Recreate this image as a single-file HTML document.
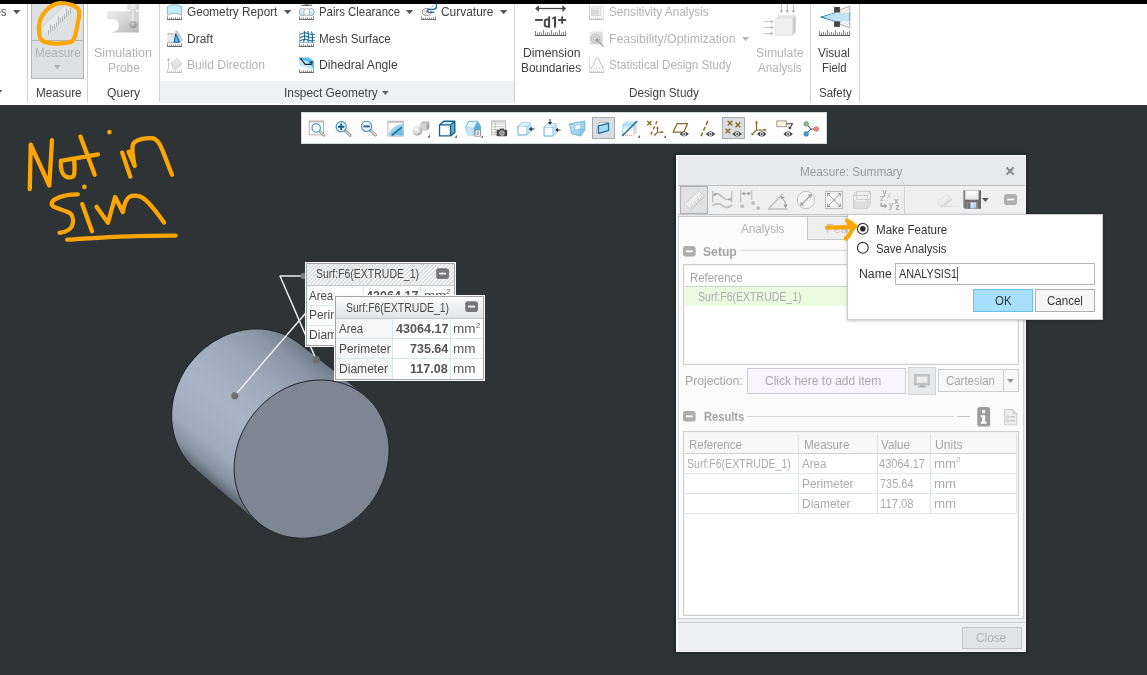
<!DOCTYPE html>
<html><head><meta charset="utf-8"><title>Measure</title>
<style>
html,body{margin:0;padding:0;}
body{width:1147px;height:675px;overflow:hidden;position:relative;background:#2e3436;font-family:"Liberation Sans",sans-serif;}
.r{position:absolute;display:block;}
.t{position:absolute;white-space:pre;transform-origin:0 0;line-height:16px;height:16px;font-family:"Liberation Sans",sans-serif;}
sup{font-size:62%;line-height:0;vertical-align:baseline;position:relative;top:-0.5em;letter-spacing:0}
</style></head><body>
<div style="position:absolute;left:0;top:0;width:1147px;height:675px;overflow:hidden;will-change:transform">
<div class="r" style="left:0.0px;top:0.0px;width:1147.0px;height:104.5px;background:#ffffff;"></div>
<div class="r" style="left:160.3px;top:81.0px;width:353.7px;height:22.0px;background:#eef2f3;"></div>
<div class="r" style="left:26.9px;top:4.0px;width:1.0px;height:98.0px;background:#cfd1d3;"></div>
<div class="r" style="left:87.0px;top:4.0px;width:1.0px;height:98.0px;background:#cfd1d3;"></div>
<div class="r" style="left:159.1px;top:4.0px;width:1.0px;height:98.0px;background:#cfd1d3;"></div>
<div class="r" style="left:513.7px;top:4.0px;width:1.0px;height:98.0px;background:#cfd1d3;"></div>
<div class="r" style="left:810.0px;top:4.0px;width:1.0px;height:98.0px;background:#cfd1d3;"></div>
<div class="r" style="left:859.0px;top:4.0px;width:1.0px;height:98.0px;background:#cfd1d3;"></div>
<span class="t" style="left:-4.7px;top:4.3px;font-size:12px;color:#3f3f3f;font-weight:400;transform:scaleX(0.8828)">es</span>
<svg class="r" style="left:12.8px;top:9.9px;" width="8" height="5" viewBox="0 0 8 5"><path d="M0,0H7.4L3.7,4.2Z" fill="#555"/></svg>
<svg class="r" style="left:-4.6px;top:90.0px;" width="8" height="5" viewBox="0 0 8 5"><path d="M0,0H7.4L3.7,4.2Z" fill="#555"/></svg>
<div class="r" style="left:31.3px;top:0.0px;width:52.7px;height:78.6px;background:#dfe0e2;border:1px solid #b4b5b7;box-sizing:border-box;"></div>
<div class="r" style="left:31.3px;top:39.7px;width:52.7px;height:1.0px;background:#b4b5b7;"></div>
<svg class="r" style="left:30.0px;top:0.0px;" width="60" height="50" viewBox="0 0 60 50"><g transform="translate(-30,0)"><path d="M41,28.2L63,6.8L72.9,11L48.3,35Z" fill="#e9eaeb"/><path d="M41,28.2L63,6.8" stroke="#c9cacc" stroke-width="0.7" fill="none"/><path d="M48.3,35L72.9,11" stroke="#cfd0d2" stroke-width="0.6" fill="none"/><path d="M48.5,34.6v-4.8M50.5,32.7v-8.3M52.5,30.7v-4.8M54.5,28.8v-4.8M56.5,26.8v-4.8M58.5,24.8v-8.3M60.5,22.9v-4.8M62.5,20.9v-4.8M64.5,19.0v-4.8M66.5,17.0v-8.3M68.5,15.1v-4.8M70.5,13.1v-4.8" stroke="#b1b2b4" stroke-width="1" fill="none"/></g></svg>
<span class="t" style="left:34.8px;top:44.9px;font-size:12px;color:#b3b3b3;font-weight:400;transform:scaleX(0.9810)">Measure</span>
<svg class="r" style="left:54.0px;top:64.8px;" width="8" height="5" viewBox="0 0 8 5"><path d="M0,0H6.6L3.3,4Z" fill="#b0b0b0"/></svg>
<span class="t" style="left:35.9px;top:84.8px;font-size:12px;color:#3f3f3f;font-weight:400;transform:scaleX(0.9767)">Measure</span>
<div class="r" style="left:0.0px;top:0.0px;width:1147.0px;height:3.6px;background:#000000;"></div>
<svg class="r" style="left:30.0px;top:0.0px;" width="60" height="50" viewBox="0 0 60 50"><path d="M30.3,3.1 C26,3.6 22.5,5 20,7 C16,10.5 13,14 11.5,17 C9.8,20.5 9,24 8.9,27 C8.8,31 9,34 9.8,36.5 C10.8,39.5 12.5,41.2 15,42 C19,43.6 23,43.7 27,43.6 C32,43.5 37,43 41,42 C43.5,41 44.5,38 45.3,35 C46.5,30.5 47.5,25 48.5,19 C49.2,15.5 49.6,13 49,10.8 C48,8 46,6.6 43.5,5.5 C40,4 35,3 30.5,3" fill="none" stroke="#fda503" stroke-width="4.2" stroke-linecap="round" stroke-linejoin="round"/></svg>
<svg class="r" style="left:105.0px;top:3.0px;" width="38" height="32" viewBox="0 0 38 32"><defs><linearGradient id="pg" x1="0" y1="0" x2="1" y2="1"><stop offset="0" stop-color="#ececec"/><stop offset="0.55" stop-color="#d2d2d2"/><stop offset="1" stop-color="#b4b4b4"/></linearGradient>
<linearGradient id="pg2" x1="0" y1="0" x2="1" y2="0"><stop offset="0" stop-color="#d9d9d9"/><stop offset="0.5" stop-color="#f0f0f0"/><stop offset="1" stop-color="#c4c4c4"/></linearGradient>
<radialGradient id="pg3" cx=".4" cy=".35" r=".7"><stop offset="0" stop-color="#cfcfcf"/><stop offset="1" stop-color="#8c8c8c"/></radialGradient></defs>
<path d="M2.2,8.3H33.8V29.6H6.1 C10,29.2 13.8,27 13.9,22.8 C13.9,18.8 11,16.2 7.5,16.1 H2.2Z" fill="url(#pg)"/>
<rect x="24.3" y="8.3" width="7.4" height="11.5" fill="#e4e4e4" opacity=".8"/>
<rect x="22.3" y="1.2" width="11.5" height="5.8" fill="url(#pg2)"/>
<rect x="26" y="6.9" width="4.1" height="12.6" fill="url(#pg2)" stroke="#bdbdbd" stroke-width="0.5"/>
<circle cx="28.1" cy="21.6" r="3.7" fill="url(#pg3)"/></svg>
<span class="t" style="left:94.2px;top:45.0px;font-size:12px;color:#b3b3b3;font-weight:400;transform:scaleX(1.0334)">Simulation</span>
<span class="t" style="left:107.7px;top:59.6px;font-size:12px;color:#b3b3b3;font-weight:400;transform:scaleX(0.9928)">Probe</span>
<span class="t" style="left:107.3px;top:84.9px;font-size:12px;color:#3f3f3f;font-weight:400;transform:scaleX(1.0126)">Query</span>
<svg class="r" style="left:166.0px;top:3.0px;" width="18" height="18" viewBox="0 0 18 18"><path d="M1.3,12.2V3.8Q8.5,-0.6 15.7,3.8V12.2Q8.5,8.4 1.3,12.2Z" fill="#c3ecfb" stroke="#9a9da0" stroke-width="0.8"/></svg>
<svg class="r" style="left:167.0px;top:14.0px;" width="16" height="6" viewBox="0 0 16 6"><path d="M0,5.5H15" stroke="#6d6d6d" stroke-width="1" fill="none"/><path d="M0.5,5v-2.6M2.5,5v-1.2M4.5,5v-1.7M6.5,5v-1.2M8.5,5v-1.7M10.5,5v-1.2M12.5,5v-1.7M14.5,5v-2.6" stroke="#6d6d6d" stroke-width="1" fill="none" opacity="0.8"/></svg>
<span class="t" style="left:186.9px;top:3.9px;font-size:12px;color:#3f3f3f;font-weight:400;transform:scaleX(0.9821)">Geometry Report</span>
<svg class="r" style="left:283.5px;top:9.6px;" width="8" height="5" viewBox="0 0 8 5"><path d="M0,0H7.2L3.6,4.2Z" fill="#555"/></svg>
<svg class="r" style="left:166.0px;top:30.0px;" width="18" height="18" viewBox="0 0 18 18"><rect x="1.3" y="3.8" width="7" height="8.5" fill="#e9e9e9"/><path d="M1.3,3.8H8.3M1.3,12.4H8.3" stroke="#9a9a9a" stroke-width="0.8"/><path d="M9.5,1.6L11.5,1.2L16.3,10.2L14.5,12Z" fill="#c9d6df" stroke="#9aa7b0" stroke-width="0.6"/><path d="M8.2,12.3L9.6,3.8L13.5,12.3Z" fill="#5bc0ee" stroke="#1b5f8c" stroke-width="1.1" stroke-linejoin="round"/></svg>
<svg class="r" style="left:167.0px;top:41.0px;" width="16" height="6" viewBox="0 0 16 6"><path d="M0,5.5H15" stroke="#6d6d6d" stroke-width="1" fill="none"/><path d="M0.5,5v-2.6M2.5,5v-1.2M4.5,5v-1.7M6.5,5v-1.2M8.5,5v-1.7M10.5,5v-1.2M12.5,5v-1.7M14.5,5v-2.6" stroke="#6d6d6d" stroke-width="1" fill="none" opacity="0.8"/></svg>
<span class="t" style="left:186.9px;top:30.6px;font-size:12px;color:#3f3f3f;font-weight:400;transform:scaleX(0.9994)">Draft</span>
<svg class="r" style="left:166.0px;top:56.0px;" width="18" height="18" viewBox="0 0 18 18"><path d="M2.5,2.6V13.5M1.1,4.6L2.5,2.2L3.9,4.6" fill="none" stroke="#b9b9b9" stroke-width="0.8"/><path d="M4.8,7.2L11.2,2L16,7.6L14.6,10.6L8,14Z" fill="#e6e6e6" stroke="#cfcfcf" stroke-width="0.7"/><path d="M4.8,7.2L9,11L8,14M9,11L16,7.6" fill="none" stroke="#cfcfcf" stroke-width="0.7"/></svg>
<svg class="r" style="left:167.0px;top:67.0px;" width="16" height="6" viewBox="0 0 16 6"><path d="M0,5.5H15" stroke="#bdbdbd" stroke-width="1" fill="none"/><path d="M0.5,5v-2.6M2.5,5v-1.2M4.5,5v-1.7M6.5,5v-1.2M8.5,5v-1.7M10.5,5v-1.2M12.5,5v-1.7M14.5,5v-2.6" stroke="#bdbdbd" stroke-width="1" fill="none" opacity="0.8"/></svg>
<span class="t" style="left:186.9px;top:56.7px;font-size:12px;color:#b3b3b3;font-weight:400;transform:scaleX(1.0094)">Build Direction</span>
<svg class="r" style="left:298.0px;top:0.0px;" width="18" height="18" viewBox="0 0 18 18"><defs><linearGradient id="pc" x1="0" y1="0" x2="0" y2="1"><stop offset="0" stop-color="#e6f6fc"/><stop offset="1" stop-color="#b5e2f5"/></linearGradient></defs><ellipse cx="4.4" cy="12.1" rx="3.2" ry="3.7" fill="url(#pc)" stroke="#9a9da0" stroke-width="0.8"/><ellipse cx="12.9" cy="12.1" rx="3.2" ry="3.7" fill="url(#pc)" stroke="#9a9da0" stroke-width="0.8"/><ellipse cx="8.65" cy="12.1" rx="2.9" ry="3.7" fill="#fff" stroke="#9a9da0" stroke-width="0.8"/><path d="M3,5.3H14.2" stroke="#333" stroke-width="0.8"/><path d="M7.2,4.3L8.2,5.8L8.7,4.6L9.2,5.8L10.2,4.3" fill="none" stroke="#333" stroke-width="0.7"/></svg>
<svg class="r" style="left:299.0px;top:14.0px;" width="16" height="6" viewBox="0 0 16 6"><path d="M0,5.5H15" stroke="#6d6d6d" stroke-width="1" fill="none"/><path d="M0.5,5v-2.6M2.5,5v-1.2M4.5,5v-1.7M6.5,5v-1.2M8.5,5v-1.7M10.5,5v-1.2M12.5,5v-1.7M14.5,5v-2.6" stroke="#6d6d6d" stroke-width="1" fill="none" opacity="0.8"/></svg>
<span class="t" style="left:318.7px;top:3.9px;font-size:12px;color:#3f3f3f;font-weight:400;transform:scaleX(0.9488)">Pairs Clearance</span>
<svg class="r" style="left:405.9px;top:9.6px;" width="8" height="5" viewBox="0 0 8 5"><path d="M0,0H7.2L3.6,4.2Z" fill="#555"/></svg>
<svg class="r" style="left:298.0px;top:30.0px;" width="18" height="18" viewBox="0 0 18 18"><path d="M1.7,1.6V12.7H16.9" fill="none" stroke="#9a9a9a" stroke-width="0.8"/><path d="M1.7,4.6Q6,1.6 10,3.4T16.8,4M1.7,8Q6,5 10,6.8T16.8,7.2M1.7,11Q6,8.4 10,10T16.8,10.2" fill="none" stroke="#2a7fb0" stroke-width="1.1"/><path d="M6.2,1Q7.6,6 5.6,12.4M10,1Q10.8,6.5 10,12.4M13.6,1.4Q15.2,7 14.2,12.4" fill="none" stroke="#1d5f88" stroke-width="1.1"/></svg>
<svg class="r" style="left:299.0px;top:41.0px;" width="16" height="6" viewBox="0 0 16 6"><path d="M0,5.5H15" stroke="#6d6d6d" stroke-width="1" fill="none"/><path d="M0.5,5v-2.6M2.5,5v-1.2M4.5,5v-1.7M6.5,5v-1.2M8.5,5v-1.7M10.5,5v-1.2M12.5,5v-1.7M14.5,5v-2.6" stroke="#6d6d6d" stroke-width="1" fill="none" opacity="0.8"/></svg>
<span class="t" style="left:318.7px;top:30.6px;font-size:12px;color:#3f3f3f;font-weight:400;transform:scaleX(0.9697)">Mesh Surface</span>
<svg class="r" style="left:298.0px;top:56.0px;" width="18" height="18" viewBox="0 0 18 18"><path d="M1.1,1.5H10.7L16.1,5.5V13.4L1.1,9.4Z" fill="#bfe8f8"/><path d="M1.1,1.5H10.7L16.1,5.5V13.4L10,5.4L1.1,3.4Z" fill="#5abfee"/><path d="M3,3L7.2,8.4H13" fill="none" stroke="#1a1a1a" stroke-width="1.1"/><path d="M11.5,6.9L14.2,5.6L13.6,8.6" fill="none" stroke="#1a1a1a" stroke-width="1"/><path d="M2.2,2.2L3.8,3.8M3.8,2.2L2.2,3.8" stroke="#1a1a1a" stroke-width="0.7"/></svg>
<svg class="r" style="left:299.0px;top:67.0px;" width="16" height="6" viewBox="0 0 16 6"><path d="M0,5.5H15" stroke="#6d6d6d" stroke-width="1" fill="none"/><path d="M0.5,5v-2.6M2.5,5v-1.2M4.5,5v-1.7M6.5,5v-1.2M8.5,5v-1.7M10.5,5v-1.2M12.5,5v-1.7M14.5,5v-2.6" stroke="#6d6d6d" stroke-width="1" fill="none" opacity="0.8"/></svg>
<span class="t" style="left:318.7px;top:56.7px;font-size:12px;color:#3f3f3f;font-weight:400;transform:scaleX(1.0094)">Dihedral Angle</span>
<svg class="r" style="left:420.0px;top:0.0px;" width="18" height="18" viewBox="0 0 18 18"><ellipse cx="6.7" cy="12" rx="4.4" ry="3.4" fill="none" stroke="#7d7d7d" stroke-width="0.9"/><path d="M6.7,12L3,10.6M6.7,12L4.4,14.2M6.7,12L9,9" stroke="#9a9a9a" stroke-width="0.6"/><path d="M16.4,3.6V6.6Q16.2,9.2 13.4,9.3H9.2Q6.8,9.6 7.2,11.2Q7.8,12.5 10,12.4H13.8" fill="none" stroke="#1f6a8e" stroke-width="1.3" stroke-linecap="round"/><path d="M11.5,7.4L13.2,5.9" stroke="#8a8a8a" stroke-width="0.8"/></svg>
<svg class="r" style="left:421.0px;top:14.0px;" width="16" height="6" viewBox="0 0 16 6"><path d="M0,5.5H15" stroke="#6d6d6d" stroke-width="1" fill="none"/><path d="M0.5,5v-2.6M2.5,5v-1.2M4.5,5v-1.7M6.5,5v-1.2M8.5,5v-1.7M10.5,5v-1.2M12.5,5v-1.7M14.5,5v-2.6" stroke="#6d6d6d" stroke-width="1" fill="none" opacity="0.8"/></svg>
<span class="t" style="left:440.8px;top:3.9px;font-size:12px;color:#3f3f3f;font-weight:400;transform:scaleX(0.9945)">Curvature</span>
<svg class="r" style="left:500.1px;top:9.6px;" width="8" height="5" viewBox="0 0 8 5"><path d="M0,0H7.2L3.6,4.2Z" fill="#555"/></svg>
<span class="t" style="left:284.2px;top:84.6px;font-size:12px;color:#3f3f3f;font-weight:400;transform:scaleX(0.9903)">Inspect Geometry</span>
<svg class="r" style="left:382.0px;top:90.6px;" width="8" height="5" viewBox="0 0 8 5"><path d="M0,0H6.8L3.4,4Z" fill="#666"/></svg>
<svg class="r" style="left:533.0px;top:3.0px;" width="36" height="28" viewBox="0 0 36 28"><g transform="translate(-533,-3)" fill="#454545"><rect x="537" y="7.9" width="27.5" height="1.25"/><path d="M538.9,5.2L535.2,8.5L538.9,11.9ZM562.4,5.2L566.1,8.5L562.4,11.9Z"/>
<rect x="535.1" y="19" width="7.7" height="1.9"/><rect x="548.2" y="16.4" width="1.9" height="11.1"/><path d="M546.4,18.6H550V27.5H546.4Q543.8,27.3 543.8,25V21.1Q543.8,18.8 546.4,18.6ZM546.8,20.4Q545.7,20.5 545.7,21.6V24.5Q545.7,25.6 546.8,25.7H548.3V20.4Z" fill-rule="evenodd"/>
<path d="M554,16.4H556V27.5H554ZM554,16.4L552.2,17.9V19.6L554,18.4Z"/><rect x="558.1" y="19.1" width="8" height="1.9"/><rect x="561.2" y="16.4" width="1.9" height="7.3"/></g></svg>
<svg class="r" style="left:535.0px;top:28.0px;" width="32" height="8" viewBox="0 0 32 8"><path d="M0,7.5H31" stroke="#5a5a5a" stroke-width="1" fill="none"/><path d="M0.5,7v-4.0M2.5,7v-2.4M4.5,7v-3.0M6.5,7v-2.4M8.5,7v-5.0M10.5,7v-2.4M12.5,7v-3.0M14.5,7v-2.4M16.5,7v-5.0M18.5,7v-2.4M20.5,7v-3.0M22.5,7v-2.4M24.5,7v-5.0M26.5,7v-2.4M28.5,7v-3.0M30.5,7v-4.0" stroke="#5a5a5a" stroke-width="1" fill="none" opacity="0.72"/></svg>
<span class="t" style="left:522.5px;top:45.0px;font-size:12px;color:#3f3f3f;font-weight:400;transform:scaleX(1.0141)">Dimension</span>
<span class="t" style="left:521.2px;top:59.9px;font-size:12px;color:#3f3f3f;font-weight:400;transform:scaleX(0.9898)">Boundaries</span>
<svg class="r" style="left:588.0px;top:3.0px;" width="18" height="17" viewBox="0 0 18 17"><g transform="translate(-588,-3)"><path d="M589.500,4.500V19" stroke="#c9c9c9" stroke-width="0.900"/><path d="M591.500,6.500H603.500V15.500" fill="none" stroke="#cfcfcf" stroke-width="0.900" stroke-dasharray="1.500 0.800"/><rect x="591.500" y="8" width="9.500" height="7.500" fill="#f1f1f1" stroke="#cdcdcd" stroke-width="0.800"/><rect x="592" y="9.500" width="7" height="6" fill="#dadada"/></g></svg>
<svg class="r" style="left:589.0px;top:14.0px;" width="16" height="6" viewBox="0 0 16 6"><path d="M0,5.5H15" stroke="#c2c2c2" stroke-width="1" fill="none"/><path d="M0.5,5v-2.6M2.5,5v-1.2M4.5,5v-1.7M6.5,5v-1.2M8.5,5v-1.7M10.5,5v-1.2M12.5,5v-1.7M14.5,5v-2.6" stroke="#c2c2c2" stroke-width="1" fill="none" opacity="0.8"/></svg>
<span class="t" style="left:608.6px;top:4.3px;font-size:12px;color:#b3b3b3;font-weight:400;transform:scaleX(0.9835)">Sensitivity Analysis</span>
<svg class="r" style="left:588.0px;top:30.0px;" width="18" height="18" viewBox="0 0 18 18"><g transform="translate(-588,-30)"><defs><linearGradient id="fz" x1="0" y1="0" x2="1" y2="1"><stop offset="0" stop-color="#ededed"/><stop offset="1" stop-color="#cfcfcf"/></linearGradient></defs><rect x="589.400" y="31.600" width="13.200" height="12.900" rx="1.500" fill="url(#fz)"/><circle cx="595.300" cy="38.300" r="4.300" fill="none" stroke="#b3b3b3" stroke-width="0.900"/><circle cx="595.300" cy="38.300" r="2.200" fill="none" stroke="#b3b3b3" stroke-width="0.900"/><path d="M603.700,46.500L597,40" stroke="#9c9c9c" stroke-width="1.100"/><path d="M595.300,38.300L599.200,39.300L596.400,42.100Z" fill="#9c9c9c"/></g></svg>
<span class="t" style="left:608.6px;top:31.1px;font-size:12px;color:#b3b3b3;font-weight:400;transform:scaleX(1.0253)">Feasibility/Optimization</span>
<svg class="r" style="left:741.6px;top:37.0px;" width="8" height="5" viewBox="0 0 8 5"><path d="M0,0H7.2L3.6,4.2Z" fill="#b8b8b8"/></svg>
<svg class="r" style="left:588.0px;top:56.0px;" width="18" height="14" viewBox="0 0 18 14"><g transform="translate(-588,-56)"><path d="M589.500,57.500V68.200H604" fill="none" stroke="#c4c4c4" stroke-width="0.900" stroke-dasharray="2 0.800"/><path d="M590.800,67.600C594,67.200 595.200,57.600 597.300,57.600C599.400,57.600 600.600,67.200 603.800,67.600" fill="none" stroke="#bdbdbd" stroke-width="1"/></g></svg>
<svg class="r" style="left:589.0px;top:67.0px;" width="16" height="6" viewBox="0 0 16 6"><path d="M0,5.5H15" stroke="#c2c2c2" stroke-width="1" fill="none"/><path d="M0.5,5v-2.6M2.5,5v-1.2M4.5,5v-1.7M6.5,5v-1.2M8.5,5v-1.7M10.5,5v-1.2M12.5,5v-1.7M14.5,5v-2.6" stroke="#c2c2c2" stroke-width="1" fill="none" opacity="0.8"/></svg>
<span class="t" style="left:608.6px;top:56.6px;font-size:12px;color:#b3b3b3;font-weight:400;transform:scaleX(0.9694)">Statistical Design Study</span>
<svg class="r" style="left:760.0px;top:3.0px;" width="40" height="34" viewBox="0 0 40 34"><g transform="translate(-760,-3)"><g stroke="#b9b9b9" stroke-width="1" fill="#b2b2b2"><path d="M781.4,3.8V11M787.3,3.8V11M793.4,3.800V11" fill="none"/><path d="M779.6,10.2L781.4,13.200L783.2,10.200ZM785.500,10.200L787.300,13.200L789.100,10.200ZM791.600,10.200L793.400,13.200L795.200,10.200Z" stroke="none"/>
<path d="M764.1,21.600H771.500M764.100,27.600H771.500M764.100,33.600H771.500" fill="none" stroke="#c4c4c4"/><path d="M770.800,19.800L773.800,21.600L770.800,23.400ZM770.800,25.800L773.800,27.600L770.800,29.400ZM770.800,31.800L773.800,33.600L770.800,35.400Z" stroke="none" fill="#bcbcbc"/></g>
<path d="M775.300,18.200L778.500,15.200H795.800L792.400,18.200Z" fill="#e2e2e2"/><path d="M792.400,18.200L795.800,15.200V32.100L792.400,35.500Z" fill="#cbcbcb"/><rect x="775.300" y="18.200" width="17.100" height="17.300" fill="#efefef" stroke="#dedede" stroke-width="0.600"/></g></svg>
<span class="t" style="left:756.1px;top:45.0px;font-size:12px;color:#b3b3b3;font-weight:400;transform:scaleX(1.0195)">Simulate</span>
<span class="t" style="left:757.7px;top:59.9px;font-size:12px;color:#b3b3b3;font-weight:400;transform:scaleX(0.9779)">Analysis</span>
<span class="t" style="left:628.5px;top:84.8px;font-size:12px;color:#3f3f3f;font-weight:400;transform:scaleX(0.9779)">Design Study</span>
<svg class="r" style="left:819.0px;top:3.0px;" width="33" height="28" viewBox="0 0 33 28"><g transform="translate(-819,-3)"><path d="M839.900,9.600L849.800,6.300V27.600L839.900,24.300Z" fill="#fbfbfb" stroke="#9a9a9a" stroke-width="0.800"/><path d="M840.500,12L846,7.800M840.500,15.500L849.500,8.600M840.500,19L849.500,12.100M840.500,22.500L849.500,15.600M842,24.800L849.500,19.100M845.500,26L849.500,22.600" stroke="#b5b5b5" stroke-width="0.600"/>
<path d="M821.200,17.100L849.500,12.900V21.100Z" fill="#bde3f5"/><path d="M834.100,15.200L821.200,17.100L834.100,19" fill="none" stroke="#1f7fb5" stroke-width="1.100" stroke-linejoin="round"/><path d="M849.500,12.900V21.100" stroke="#1f7fb5" stroke-width="1.100"/><path d="M821.200,17.100L836,12.700M821.200,17.100L836,21.500" stroke="#1f7fb5" stroke-width="1" fill="none"/>
<path d="M822.500,17.100L836,13.100L849.500,12.900V21.100L836,21.100Z" fill="#bde3f5"/><rect x="834.100" y="6.900" width="5.800" height="5.600" fill="#444"/><rect x="834.100" y="21.300" width="5.800" height="5.600" fill="#444"/></g></svg>
<svg class="r" style="left:819.0px;top:28.0px;" width="32.5" height="8" viewBox="0 0 32.5 8"><path d="M0,7.5H31" stroke="#5a5a5a" stroke-width="1" fill="none"/><path d="M0.5,7v-4.0M2.5,7v-2.4M4.5,7v-3.0M6.5,7v-2.4M8.5,7v-5.0M10.5,7v-2.4M12.5,7v-3.0M14.5,7v-2.4M16.5,7v-5.0M18.5,7v-2.4M20.5,7v-3.0M22.5,7v-2.4M24.5,7v-5.0M26.5,7v-2.4M28.5,7v-3.0M30.5,7v-4.0" stroke="#5a5a5a" stroke-width="1" fill="none" opacity="0.72"/></svg>
<span class="t" style="left:818.3px;top:45.0px;font-size:12px;color:#3f3f3f;font-weight:400;transform:scaleX(0.9794)">Visual</span>
<span class="t" style="left:822.3px;top:59.9px;font-size:12px;color:#3f3f3f;font-weight:400;transform:scaleX(0.9417)">Field</span>
<span class="t" style="left:819.0px;top:84.8px;font-size:12px;color:#3f3f3f;font-weight:400;transform:scaleX(0.9609)">Safety</span>
<div class="r" style="left:300.9px;top:111.7px;width:526.4px;height:32.4px;background:#ffffff;border:1px solid #d3dadd;box-sizing:border-box;"></div>
<div class="r" style="left:591.9px;top:117.1px;width:22.8px;height:22.3px;background:#dcdddf;border:1px solid #a9aaac;box-sizing:border-box;"></div>
<div class="r" style="left:722.3px;top:117.1px;width:22.3px;height:22.3px;background:#dcdddf;border:1px solid #a9aaac;box-sizing:border-box;"></div>
<svg class="r" style="left:307.3px;top:117.5px;" width="20" height="20" viewBox="0 0 20 20"><rect x="2.2" y="3" width="14.3" height="13.9" fill="#fbfbfb" stroke="#ababab" stroke-width="0.9"/><rect x="2.2" y="3" width="14.3" height="1.4" fill="#b9b9b9"/><path d="M12.6,13.3L16.8,17.2" stroke="#8c8c8c" stroke-width="2.8" stroke-linecap="round"/><path d="M12.6,13.3L16.8,17.2" stroke="#dedede" stroke-width="1.3" stroke-linecap="round"/><circle cx="9.2" cy="9.9" r="4.2" fill="#f2f9fd" stroke="#3a8fc0" stroke-width="1.1"/></svg>
<svg class="r" style="left:332.7px;top:117.5px;" width="20" height="20" viewBox="0 0 20 20"><path d="M12.3,12.9L17.2,17.4" stroke="#8c8c8c" stroke-width="2.8" stroke-linecap="round"/><path d="M12.3,12.9L17.2,17.4" stroke="#dedede" stroke-width="1.3" stroke-linecap="round"/><circle cx="8.2" cy="8.7" r="5.1" fill="#f2f9fd" stroke="#3a8fc0" stroke-width="1.1"/><path d="M5,8.7H11.4M8.2,5.500V11.9" stroke="#1b5d8c" stroke-width="1.9"/></svg>
<svg class="r" style="left:358.2px;top:117.5px;" width="20" height="20" viewBox="0 0 20 20"><path d="M12.7,12.6L17.6,17.1" stroke="#8c8c8c" stroke-width="2.8" stroke-linecap="round"/><path d="M12.7,12.6L17.6,17.1" stroke="#dedede" stroke-width="1.3" stroke-linecap="round"/><circle cx="8.6" cy="8.4" r="5.1" fill="#f2f9fd" stroke="#3a8fc0" stroke-width="1.1"/><path d="M5.400,8.400H11.8" stroke="#1b5d8c" stroke-width="1.9"/></svg>
<svg class="r" style="left:384.5px;top:117.5px;" width="20" height="20" viewBox="0 0 20 20"><defs><linearGradient id="rp" x1="0" y1="0" x2="1" y2="1"><stop offset="0.2" stop-color="#c3e3f2"/><stop offset="1" stop-color="#58afd8"/></linearGradient></defs><rect x="2.900" y="3.200" width="15.4" height="14.9" fill="#fff" stroke="#b1b1b1" stroke-width="0.9"/><path d="M3.500,17.600Q4.500,8 17.800,5.800V17.600Z" fill="url(#rp)"/><rect x="2.900" y="3.200" width="15.4" height="1.5" fill="#b9b9b9"/><path d="M7.200,17L16.300,9.600" stroke="#1f6fa3" stroke-width="1.8" stroke-linecap="round"/></svg>
<svg class="r" style="left:410.4px;top:117.5px;" width="20" height="20" viewBox="0 0 20 20"><defs><radialGradient id="sg" cx=".38" cy=".35" r=".75"><stop offset="0" stop-color="#ffffff"/><stop offset="0.55" stop-color="#d4d4d4"/><stop offset="1" stop-color="#8f8f8f"/></radialGradient></defs><path d="M9.600,6.200H16.300V12.900H9.600Z" fill="#d4d4d4"/><path d="M9.600,6.200L13,3.300H19.300L16.300,6.200Z" fill="#c2c2c2"/><path d="M16.300,6.200L19.300,3.300V10.600L16.300,12.900Z" fill="#a5a5a5"/><circle cx="7.400" cy="13" r="4.700" fill="url(#sg)"/><path d="M17.300,19.500H20V16.800Z" fill="#555"/></svg>
<svg class="r" style="left:436.8px;top:117.5px;" width="20" height="20" viewBox="0 0 20 20"><path d="M2.5,6.900L6.800,3.200H17.800L13.500,6.900Z" fill="#d2edf8"/><path d="M13.500,6.900L17.800,3.200V14.500L13.500,17.900Z" fill="#5bb0d6"/><path d="M2.500,6.900H13.500V17.900H2.500Z" fill="#fff"/><path d="M2.500,6.900L6.800,3.200H17.800V14.500L13.500,17.900H2.500ZM2.500,6.900H13.500V17.900M13.500,6.900L17.800,3.200" fill="none" stroke="#1a6090" stroke-width="1.35" stroke-linejoin="round"/><path d="M17.400,19.700H20V17.100Z" fill="#555"/></svg>
<svg class="r" style="left:463.2px;top:117.5px;" width="20" height="20" viewBox="0 0 20 20"><path d="M2.400,9.600L5.400,3.500L14.600,3.200L17.600,8.400V16.900H5.400Z" fill="#e3f4fb" stroke="#58aad3" stroke-width="0.9" stroke-linejoin="round"/><path d="M2.400,9.600L10.800,10.400L14.600,3.200M10.800,10.400V16.900" fill="none" stroke="#7cc3e6" stroke-width="0.8"/><path d="M2.400,9.600L10.800,10.400V16.900H5.400Z" fill="#c4e6f5"/><path d="M10.800,10.400L14.600,3.200L17.600,8.400V16.900H10.800Z" fill="#5fb0d8"/><rect x="12.100" y="12" width="5.400" height="6.200" fill="#fbfbfb" stroke="#8a8a8a" stroke-width="0.8"/><path d="M13.600,14.100H16M13.600,16.100H16" stroke="#666" stroke-width="0.9"/><path d="M17.800,19.700H20V17.500Z" fill="#555"/></svg>
<svg class="r" style="left:489.5px;top:117.5px;" width="20" height="20" viewBox="0 0 20 20"><rect x="1.700" y="2.900" width="13.800" height="14" fill="#fff" stroke="#b3b3b3" stroke-width="0.9"/><path d="M1.700,6H15.500M1.700,8.800H15.500M1.700,11.600H15.500M1.700,14.400H15.500M5.200,2.900V16.900" stroke="#b9b9b9" stroke-width="0.8"/><rect x="1.700" y="2.900" width="13.800" height="1.600" fill="#c9c9c9"/><rect x="6.600" y="11.800" width="10.600" height="6.400" rx="1" fill="#484848"/><rect x="10" y="10.600" width="4" height="2" rx="0.500" fill="#484848"/><circle cx="12" cy="15.100" r="2.300" fill="#8a8a8a" stroke="#d9d9d9" stroke-width="0.800"/></svg>
<svg class="r" style="left:515.0px;top:117.5px;" width="20" height="20" viewBox="0 0 20 20"><path d="M3,8L6,5H15V14L12,17H3Z" fill="#fff" stroke="#5aaeda" stroke-width="1"/><path d="M3,8H12V17M12,8L15,5" fill="none" stroke="#5aaeda" stroke-width="0.9"/><path d="M12,8L15,5V14L12,17Z" fill="#b9e0f4"/><path d="M6,5H15L12,8H3Z" fill="#def0fa"/><path d="M19.5,11H14.5" stroke="#333" stroke-width="1.1"/><path d="M16.8,8.6L14,11L16.8,13.4Z" fill="#333"/></svg>
<svg class="r" style="left:541.3px;top:117.5px;" width="20" height="20" viewBox="0 0 20 20"><path d="M3,9L6,6H15V15L12,18H3Z" fill="#fff" stroke="#5aaeda" stroke-width="1"/><path d="M3,9H12V18M12,9L15,6" fill="none" stroke="#5aaeda" stroke-width="0.9"/><path d="M12,9L15,6V15L12,18Z" fill="#b9e0f4"/><path d="M6,6H15L12,9H3Z" fill="#def0fa"/><path d="M19.5,12H15" stroke="#333" stroke-width="1.1"/><path d="M17,9.8L14.4,12L17,14.2Z" fill="#333"/><path d="M9,1V5" stroke="#333" stroke-width="1.1"/><path d="M6.8,4L9,6.8L11.2,4Z" fill="#333"/></svg>
<svg class="r" style="left:566.7px;top:117.5px;" width="20" height="20" viewBox="0 0 20 20"><defs><linearGradient id="pb" x1="0" y1="0" x2="1" y2="1"><stop offset="0" stop-color="#d4edf8"/><stop offset="1" stop-color="#7fc2e2"/></linearGradient></defs><path d="M2.400,5.900L17.900,2.900V12L13.600,18.100L4.500,15.700Z" fill="url(#pb)" stroke="#6fb5d6" stroke-width="0.9" stroke-linejoin="round"/><path d="M8.100,7.100L13.600,6.500V10.800L8.100,11.800Z" fill="#f4f4f4" stroke="#9cc9df" stroke-width="0.6"/><path d="M2.400,5.900L8.100,7.100M17.900,2.900L13.600,6.500M17.900,12L13.600,10.800M4.500,15.700L8.100,11.800M13.600,18.100V10.800" fill="none" stroke="#6fb5d6" stroke-width="0.7"/></svg>
<svg class="r" style="left:593.1px;top:117.5px;" width="20" height="20" viewBox="0 0 20 20"><path d="M5.500,7.800Q4.600,4.300 9.200,4.100L15.500,4.500V5.300L5.500,7.800Q3.300,9.500 3.700,14.200L5.500,15.400Z" fill="#fbfbfb" stroke="#8a9aa5" stroke-width="0.8" stroke-linejoin="round"/><path d="M5.500,7.800L15.500,5.300V12.600L5.500,15.400Z" fill="#a5dcf5" stroke="#1e6f9f" stroke-width="1.2" stroke-linejoin="round"/></svg>
<svg class="r" style="left:619.5px;top:117.5px;" width="20" height="20" viewBox="0 0 20 20"><defs><linearGradient id="sc" x1="0" y1="0" x2="0" y2="1"><stop offset="0" stop-color="#b5e0f3"/><stop offset="0.6" stop-color="#ffffff"/></linearGradient></defs><path d="M2.900,6.500H13.300V17.500H2.900Z" fill="url(#sc)"/><path d="M2.900,6.500L6,3.900H16.600L13.300,6.500Z" fill="#c6e8f6" stroke="#8ccbe8" stroke-width="0.6"/><path d="M2.900,6.500V17.500" stroke="#8ccbe8" stroke-width="0.8"/><path d="M13.300,6.500L16.600,3.900V14.600L13.300,17.500Z" fill="#e9e9e9"/><path d="M13.800,7.500V17M15,6.500V16M16.200,5.500V15" stroke="#9a9a9a" stroke-width="0.6" stroke-dasharray="0.7 0.9"/><path d="M3,17.500H13.300" stroke="#8a8a8a" stroke-width="0.8" stroke-dasharray="0.9 1.1"/><path d="M2.100,18.100L17.200,2.900" stroke="#1d6a98" stroke-width="1.4"/><path d="M17.400,19.700H20V17.100Z" fill="#555"/></svg>
<svg class="r" style="left:645.9px;top:117.5px;" width="20" height="20" viewBox="0 0 20 20"><path d="M1.2999999999999998,2.9999999999999996L5.5,7.199999999999999M5.5,2.9999999999999996L1.2999999999999998,7.199999999999999" stroke="#8b6a2b" stroke-width="1.3"/><path d="M11.100,3.200L4.200,17.900" stroke="#8b6a2b" stroke-width="1.4" stroke-dasharray="3.4 2.3"/><path d="M11.500,9.500V14.200H16.300M11.500,14.200L9.200,16.600" fill="none" stroke="#8b6a2b" stroke-width="1.1"/><path d="M10.100,10.600L11.500,8L12.900,10.600ZM15.400,12.800L18,14.200L15.400,15.600ZM8.300,15.200L8.200,17.700L10.600,17.300Z" fill="#8b6a2b"/><path d="M17.500,19.700H20V17.200Z" fill="#555"/></svg>
<svg class="r" style="left:672.2px;top:117.5px;" width="20" height="20" viewBox="0 0 20 20"><path d="M5.100,5.700H15.500L11.800,14.200H1.100Z" fill="#fffdf8" stroke="#8b6a2b" stroke-width="1.300" stroke-linejoin="round"/><path d="M7.6,15.9Q12.2,10.94 16.799999999999997,15.9Q12.2,20.86 7.6,15.9Z" fill="#454545"/><circle cx="12.2" cy="15.9" r="1.9" fill="#fff"/><circle cx="12.2" cy="15.9" r="1.0" fill="#3a3a3a"/></svg>
<svg class="r" style="left:698.1px;top:117.5px;" width="20" height="20" viewBox="0 0 20 20"><path d="M9.800,2.900L3.100,18.100" stroke="#8b6a2b" stroke-width="1.5" stroke-dasharray="4.2 2.2"/><path d="M7.8,15.9Q12.5,10.620000000000001 17.2,15.9Q12.5,21.18 7.8,15.9Z" fill="#454545"/><circle cx="12.5" cy="15.9" r="1.9" fill="#fff"/><circle cx="12.5" cy="15.9" r="1.0" fill="#3a3a3a"/></svg>
<svg class="r" style="left:724.5px;top:117.5px;" width="20" height="20" viewBox="0 0 20 20"><path d="M2.7,2.8L7.3,7.3999999999999995M7.3,2.8L2.7,7.3999999999999995" stroke="#8b6a2b" stroke-width="1.35"/><path d="M10.600000000000001,4.6000000000000005L15.2,9.2M15.2,4.6000000000000005L10.600000000000001,9.2" stroke="#8b6a2b" stroke-width="1.35"/><path d="M0.6000000000000001,10.7L5.199999999999999,15.3M5.199999999999999,10.7L0.6000000000000001,15.3" stroke="#8b6a2b" stroke-width="1.35"/><path d="M7.3999999999999995,15.9Q12.1,10.620000000000001 16.8,15.9Q12.1,21.18 7.3999999999999995,15.9Z" fill="#454545"/><circle cx="12.1" cy="15.9" r="1.9" fill="#fff"/><circle cx="12.1" cy="15.9" r="1.0" fill="#3a3a3a"/></svg>
<svg class="r" style="left:749.9px;top:117.5px;" width="20" height="20" viewBox="0 0 20 20"><path d="M6.500,4V12H15M6.500,12L2.600,15.900" fill="none" stroke="#8b6a2b" stroke-width="1.2"/><path d="M5.100,5.200L6.500,2.600L7.900,5.200ZM14.400,10.600L16.800,12L14.400,13.400ZM1.500,14.400L1.400,17.200L4.100,16.900Z" fill="#8b6a2b"/><path d="M6.999999999999999,15.9Q11.7,10.620000000000001 16.4,15.9Q11.7,21.18 6.999999999999999,15.9Z" fill="#454545"/><circle cx="11.7" cy="15.9" r="1.9" fill="#fff"/><circle cx="11.7" cy="15.9" r="1.0" fill="#3a3a3a"/></svg>
<svg class="r" style="left:776.3px;top:117.5px;" width="20" height="20" viewBox="0 0 20 20"><rect x="0.900" y="2.900" width="9.400" height="5.800" fill="#fdf5d8" stroke="#8d8d8d" stroke-width="0.900"/><path d="M10.300,5.800H16.400L13.800,10" fill="none" stroke="#3a3a3a" stroke-width="1.100"/><path d="M12.200,8.600L13.200,11.400L15.800,9.900Z" fill="#3a3a3a"/><path d="M7.3999999999999995,15.9Q12.1,10.620000000000001 16.8,15.9Q12.1,21.18 7.3999999999999995,15.9Z" fill="#454545"/><circle cx="12.1" cy="15.9" r="1.9" fill="#fff"/><circle cx="12.1" cy="15.9" r="1.0" fill="#3a3a3a"/></svg>
<svg class="r" style="left:801.2px;top:117.5px;" width="20" height="20" viewBox="0 0 20 20"><path d="M5.200,5.900L9.800,11.100L5.200,15.900M9.800,11.100H15.300" fill="none" stroke="#4a4a4a" stroke-width="1"/><circle cx="5.200" cy="5.900" r="2.400" fill="#86b985" stroke="#5f9a5e" stroke-width="0.600"/><circle cx="5.200" cy="15.900" r="2.400" fill="#4a98c4" stroke="#2f7aa6" stroke-width="0.600"/><circle cx="15.300" cy="11.100" r="2.400" fill="#ea8585" stroke="#cf5f5f" stroke-width="0.600"/></svg>
<svg class="r" style="left:0.0px;top:104.0px;" width="300" height="160" viewBox="0 104 300 160"><g fill="none" stroke="#fda503" stroke-width="4.3" stroke-linecap="round" stroke-linejoin="round"><path d="M29.8,189 L30.7,144.6 L49.3,185.5 L52,140.1
M60.9,161.5 C60.5,168 61.5,173.5 65,176 C68.5,178.5 73,177.5 74,175 C75,171 74.5,165 74.2,160.4
M60.9,160.8 L98,154.3
M80.5,136.6 L94.7,174.8
M122.2,152.6 L130.3,176.6
M128.5,151.7 L134.7,165.9 C133,157 131,147.5 133.5,143.5 C137,139 147,137.5 153.4,138.3 C158,140 160,144 162.3,149.9 L172,174.8
M77.8,194.4 C70,194.5 62,195.5 56.5,198.5 C52,200.5 50,204 53.5,206.6 C58,209 66,210.5 70.5,213.5 C73.5,216.5 73.5,222 72,226 C70,230.5 65,232 59.5,232.9
M82.2,204.1 L92,231.3
M96.5,206.8 L108,222.8 L115.1,197 L122.8,212.1 C124,205 126,199 129.5,196.8 C133,194.8 139,195.5 143,198 C150,203 158,214 164,222.4
M67.1,239.7 C85,238.6 100,237.4 115,236.8 C135,236 160,235.8 175.6,235.6"/></g><circle cx="109.4" cy="132.1" r="2.3" fill="#fda503"/><circle cx="84.4" cy="186.9" r="2.3" fill="#fda503"/></svg>
<svg class="r" style="left:150.0px;top:310.0px;" width="260" height="240" viewBox="150 310 260 240"><defs><linearGradient id="cg" gradientUnits="userSpaceOnUse" x1="227.7" y1="496.3" x2="332.5" y2="370.2">
<stop offset="0" stop-color="#5b6571"/><stop offset="0.07" stop-color="#8793a2"/><stop offset="0.18" stop-color="#a0acbd"/><stop offset="0.42" stop-color="#a9b5c6"/><stop offset="0.68" stop-color="#9eaabb"/><stop offset="0.88" stop-color="#8a96a5"/><stop offset="1" stop-color="#727d8b"/></linearGradient></defs>
<path d="M300.5,344.9L301.9,346.2L303.3,347.5L304.7,348.8L306.1,350.1L307.4,351.5L308.6,353.0L309.8,354.5L311.0,356.0L312.1,357.5L313.2,359.1L314.3,360.7L315.3,362.4L316.2,364.1L317.2,365.8L318.0,367.5L318.8,369.3L319.6,371.1L320.3,372.9L321.0,374.7L321.6,376.6L322.2,378.5L322.7,380.4L323.2,382.3L323.6,384.3L323.9,386.2L324.3,388.2L324.5,390.2L324.7,392.2L324.9,394.2L325.0,396.2L325.0,398.2L325.0,400.2L325.0,402.3L324.9,404.3L324.7,406.4L324.5,408.4L324.3,410.4L324.0,412.5L323.6,414.5L323.2,416.5L322.7,418.6L322.2,420.6L321.6,422.6L321.0,424.6L320.3,426.6L319.6,428.5L318.9,430.5L318.0,432.4L317.2,434.4L316.3,436.3L315.3,438.2L314.3,440.0L313.3,441.9L312.2,443.7L311.1,445.5L309.9,447.2L308.7,449.0L307.4,450.7L306.1,452.4L304.8,454.0L303.4,455.6L302.0,457.2L300.5,458.8L299.0,460.3L297.5,461.8L296.0,463.2L294.4,464.6L292.8,466.0L291.1,467.3L289.4,468.6L287.7,469.9L286.0,471.1L284.2,472.2L282.4,473.3L280.6,474.4L278.8,475.4L277.0,476.4L275.1,477.3L273.2,478.2L271.3,479.0L269.4,479.8L267.5,480.5L265.5,481.2L263.6,481.8L261.6,482.4L259.6,483.0L257.6,483.4L255.6,483.9L253.6,484.2L251.6,484.5L249.6,484.8L247.6,485.0L245.6,485.2L243.6,485.3L241.6,485.4L239.7,485.4L237.7,485.3L235.7,485.2L233.7,485.0L231.8,484.8L229.8,484.6L227.9,484.2L226.0,483.9L224.1,483.4L222.2,483.0L220.3,482.4L218.5,481.9L216.6,481.2L214.8,480.5L213.0,479.8L211.3,479.0L209.5,478.2L207.8,477.3L206.2,476.4L204.5,475.4L202.9,474.4L201.3,473.3L199.7,472.2L198.2,471.1L196.7,469.9L195.3,468.6L193.9,467.3L192.5,466.0L191.1,464.7L189.8,463.3L188.6,461.8L187.4,460.3L186.2,458.8L185.1,457.3L184.0,455.7L182.9,454.1L181.9,452.4L181.0,450.7L180.0,449.0L179.2,447.3L178.4,445.5L177.6,443.7L176.9,441.9L176.2,440.1L175.6,438.2L175.0,436.3L174.5,434.4L174.0,432.5L173.6,430.5L173.3,428.6L172.9,426.6L172.7,424.6L172.5,422.6L172.3,420.6L172.2,418.6L172.2,416.6L172.2,414.6L172.2,412.5L172.3,410.5L172.5,408.4L172.7,406.4L172.9,404.4L173.2,402.3L173.6,400.3L174.0,398.3L174.5,396.2L175.0,394.2L175.6,392.2L176.2,390.2L176.9,388.2L177.6,386.3L178.3,384.3L179.2,382.4L180.0,380.4L180.9,378.5L181.9,376.6L182.9,374.8L183.9,372.9L185.0,371.1L186.1,369.3L187.3,367.6L188.5,365.8L189.8,364.1L191.1,362.4L192.4,360.8L193.8,359.2L195.2,357.6L196.7,356.0L198.2,354.5L199.7,353.0L201.2,351.6L202.8,350.2L204.4,348.8L206.1,347.5L207.8,346.2L209.5,344.9L211.2,343.7L213.0,342.6L214.8,341.5L216.6,340.4L218.4,339.4L220.2,338.4L222.1,337.5L224.0,336.6L225.9,335.8L227.8,335.0L229.7,334.3L231.7,333.6L233.6,333.0L235.6,332.4L237.6,331.8L239.6,331.4L241.6,330.9L243.6,330.6L245.6,330.3L247.6,330.0L249.6,329.8L251.6,329.6L253.6,329.5L255.6,329.4L257.5,329.4L259.5,329.5L261.5,329.6L263.5,329.8L265.4,330.0L267.4,330.2L269.3,330.6L271.2,330.9L273.1,331.4L275.0,331.8L276.9,332.4L278.7,332.9L280.6,333.6L282.4,334.3L284.2,335.0L285.9,335.8L287.7,336.6L289.4,337.5L291.0,338.4L292.7,339.4L294.3,340.4L295.9,341.5L297.5,342.6L299.0,343.7Z" fill="none" stroke="#1a1e20" stroke-width="1.5"/><path d="M172.2,414.6L172.2,412.5L172.3,410.5L172.5,408.4L172.7,406.4L172.9,404.4L173.2,402.3L173.6,400.3L174.0,398.3L174.5,396.2L175.0,394.2L175.6,392.2L176.2,390.2L176.9,388.2L177.6,386.3L178.3,384.3L179.2,382.4L180.0,380.4L180.9,378.5L181.9,376.6L182.9,374.8L183.9,372.9L185.0,371.1L186.1,369.3L187.3,367.6L188.5,365.8L189.8,364.1L191.1,362.4L192.4,360.8L193.8,359.2L195.2,357.6L196.7,356.0L198.2,354.5L199.7,353.0L201.2,351.6L202.8,350.2L204.4,348.8L206.1,347.5L207.8,346.2L209.5,344.9L211.2,343.7L213.0,342.6L214.8,341.5L216.6,340.4L218.4,339.4L220.2,338.4L222.1,337.5L224.0,336.6L225.9,335.8L227.8,335.0L229.7,334.3L231.7,333.6L233.6,333.0L235.6,332.4L237.6,331.8L239.6,331.4L241.6,330.9L243.6,330.6L245.6,330.3L247.6,330.0L249.6,329.8L251.6,329.6L253.6,329.5L255.6,329.4L257.5,329.4L259.5,329.5L261.5,329.6L263.5,329.8L265.4,330.0L267.4,330.2L269.3,330.6L271.2,330.9L273.1,331.4L275.0,331.8L276.9,332.4L278.7,332.9L280.6,333.6L282.4,334.3L284.2,335.0L285.9,335.8L287.7,336.6L289.4,337.5L291.0,338.4L292.7,339.4L294.3,340.4L295.9,341.5L297.5,342.6L299.0,343.7L363.0,394.2L364.5,395.4L365.9,396.7L367.3,398.0L368.7,399.3L370.1,400.7L371.4,402.1L372.7,403.6L373.9,405.1L375.1,406.6L376.2,408.2L377.3,409.8L378.3,411.4L379.3,413.1L380.3,414.8L381.2,416.5L382.1,418.2L382.9,420.0L383.7,421.8L384.4,423.7L385.0,425.5L385.7,427.4L386.2,429.3L386.7,431.3L387.2,433.2L387.6,435.2L388.0,437.2L388.3,439.2L388.5,441.2L388.7,443.2L388.9,445.2L389.0,447.3L389.0,449.3L389.0,451.4L388.9,453.5L388.8,455.5L388.6,457.6L388.4,459.7L388.1,461.7L387.8,463.8L387.4,465.9L387.0,467.9L386.5,470.0L386.0,472.0L385.4,474.1L384.8,476.1L384.1,478.1L383.3,480.1L382.6,482.1L381.7,484.1L380.8,486.0L379.9,488.0L378.9,489.9L377.9,491.8L376.8,493.7L375.7,495.5L374.6,497.3L373.4,499.1L372.1,500.9L370.8,502.7L369.5,504.4L368.2,506.0L366.7,507.7L365.3,509.3L363.8,510.9L362.3,512.4L360.8,514.0L359.2,515.4L357.6,516.9L355.9,518.3L354.2,519.6L352.5,520.9L350.8,522.2L349.0,523.4L347.3,524.6L345.5,525.7L343.6,526.8L341.8,527.9L339.9,528.9L338.0,529.8L336.1,530.7L334.1,531.6L332.2,532.4L330.2,533.2L328.3,533.9L326.3,534.5L324.3,535.1L322.3,535.7L320.3,536.1L318.3,536.6L316.2,537.0L314.2,537.3L312.2,537.6L310.2,537.8L308.1,538.0L306.1,538.1L304.1,538.2L302.1,538.2L300.1,538.2L298.1,538.1L296.1,537.9L294.1,537.7L292.1,537.5L290.2,537.1L288.2,536.8L286.3,536.4L284.4,535.9L282.5,535.4L280.7,534.8L278.8,534.2L277.0,533.5L275.2,532.7L273.4,532.0L271.7,531.1L269.9,530.3L268.2,529.3L266.6,528.4L264.9,527.3L263.3,526.3L261.8,525.1L260.2,524.0L258.7,522.8L196.7,469.9L195.3,468.6L193.9,467.3L192.5,466.0L191.1,464.7L189.8,463.3L188.6,461.8L187.4,460.3L186.2,458.8L185.1,457.3L184.0,455.7L182.9,454.1L181.9,452.4L181.0,450.7L180.0,449.0L179.2,447.3L178.4,445.5L177.6,443.7L176.9,441.9L176.2,440.1L175.6,438.2L175.0,436.3L174.5,434.4L174.0,432.5L173.6,430.5L173.3,428.6L172.9,426.6L172.7,424.6L172.5,422.6L172.3,420.6L172.2,418.6L172.2,416.6Z" fill="url(#cg)"/><path d="M364.5,395.4L365.9,396.7L367.3,398.0L368.7,399.3L370.1,400.7L371.4,402.1L372.7,403.6L373.9,405.1L375.1,406.6L376.2,408.2L377.3,409.8L378.3,411.4L379.3,413.1L380.3,414.8L381.2,416.5L382.1,418.2L382.9,420.0L383.7,421.8L384.4,423.7L385.0,425.5L385.7,427.4L386.2,429.3L386.7,431.3L387.2,433.2L387.6,435.2L388.0,437.2L388.3,439.2L388.5,441.2L388.7,443.2L388.9,445.2L389.0,447.3L389.0,449.3L389.0,451.4L388.9,453.5L388.8,455.5L388.6,457.6L388.4,459.7L388.1,461.7L387.8,463.8L387.4,465.9L387.0,467.9L386.5,470.0L386.0,472.0L385.4,474.1L384.8,476.1L384.1,478.1L383.3,480.1L382.6,482.1L381.7,484.1L380.8,486.0L379.9,488.0L378.9,489.9L377.9,491.8L376.8,493.7L375.7,495.5L374.6,497.3L373.4,499.1L372.1,500.9L370.8,502.7L369.5,504.4L368.2,506.0L366.7,507.7L365.3,509.3L363.8,510.9L362.3,512.4L360.8,514.0L359.2,515.4L357.6,516.9L355.9,518.3L354.2,519.6L352.5,520.9L350.8,522.2L349.0,523.4L347.3,524.6L345.5,525.7L343.6,526.8L341.8,527.9L339.9,528.9L338.0,529.8L336.1,530.7L334.1,531.6L332.2,532.4L330.2,533.2L328.3,533.9L326.3,534.5L324.3,535.1L322.3,535.7L320.3,536.1L318.3,536.6L316.2,537.0L314.2,537.3L312.2,537.6L310.2,537.8L308.1,538.0L306.1,538.1L304.1,538.2L302.1,538.2L300.1,538.2L298.1,538.1L296.1,537.9L294.1,537.7L292.1,537.5L290.2,537.1L288.2,536.8L286.3,536.4L284.4,535.9L282.5,535.4L280.7,534.8L278.8,534.2L277.0,533.5L275.2,532.7L273.4,532.0L271.7,531.1L269.9,530.3L268.2,529.3L266.6,528.4L264.9,527.3L263.3,526.3L261.8,525.1L260.2,524.0L258.7,522.8L257.3,521.5L255.9,520.2L254.5,518.9L253.1,517.5L251.8,516.1L250.5,514.6L249.3,513.1L248.1,511.6L247.0,510.0L245.9,508.4L244.9,506.8L243.9,505.1L242.9,503.4L242.0,501.7L241.1,500.0L240.3,498.2L239.5,496.4L238.8,494.5L238.2,492.7L237.5,490.8L237.0,488.9L236.5,486.9L236.0,485.0L235.6,483.0L235.2,481.0L234.9,479.0L234.7,477.0L234.5,475.0L234.3,473.0L234.2,470.9L234.2,468.9L234.2,466.8L234.3,464.7L234.4,462.7L234.6,460.6L234.8,458.5L235.1,456.5L235.4,454.4L235.8,452.3L236.2,450.3L236.7,448.2L237.2,446.2L237.8,444.1L238.4,442.1L239.1,440.1L239.9,438.1L240.6,436.1L241.5,434.1L242.4,432.2L243.3,430.2L244.3,428.3L245.3,426.4L246.4,424.5L247.5,422.7L248.6,420.9L249.8,419.1L251.1,417.3L252.4,415.5L253.7,413.8L255.0,412.2L256.5,410.5L257.9,408.9L259.4,407.3L260.9,405.8L262.4,404.2L264.0,402.8L265.6,401.3L267.3,399.9L269.0,398.6L270.7,397.3L272.4,396.0L274.2,394.8L275.9,393.6L277.7,392.5L279.6,391.4L281.4,390.3L283.3,389.3L285.2,388.4L287.1,387.5L289.1,386.6L291.0,385.8L293.0,385.0L294.9,384.3L296.9,383.7L298.9,383.1L300.9,382.5L302.9,382.1L304.9,381.6L307.0,381.2L309.0,380.9L311.0,380.6L313.0,380.4L315.1,380.2L317.1,380.1L319.1,380.0L321.1,380.0L323.1,380.0L325.1,380.1L327.1,380.3L329.1,380.5L331.1,380.7L333.0,381.1L335.0,381.4L336.9,381.8L338.8,382.3L340.7,382.8L342.5,383.4L344.4,384.0L346.2,384.7L348.0,385.5L349.8,386.2L351.5,387.1L353.3,387.9L355.0,388.9L356.6,389.8L358.3,390.9L359.9,391.9L361.4,393.1L363.0,394.2Z" fill="#7d8692" stroke="#15191b" stroke-width="0.9"/></svg>
<svg class="r" style="left:220.0px;top:260.0px;" width="130" height="150" viewBox="220 260 130 150"><g fill="none" stroke="#ececec" stroke-width="1.5" stroke-linejoin="round"><path d="M332,307.6H310.5L234.6,395.7"/><path d="M304,276H280L316.2,359.6"/></g>
<circle cx="234.8" cy="395.8" r="3.6" fill="#6f6f6f"/><circle cx="316.2" cy="359.7" r="3.6" fill="#6f6f6f"/><circle cx="303.4" cy="276" r="3" fill="#7d7d7d"/></svg>
<div class="r" style="left:304.9px;top:261.7px;width:151.0px;height:85.8px;background:#fbfbfb;"></div>
<div class="r" style="left:306.0px;top:262.9px;width:148.9px;height:83.4px;background:#ffffff;border:1px solid #a3a5a7;box-sizing:border-box;"></div>
<div class="r" style="left:306.9px;top:263.8px;width:147.0px;height:21.0px;background:#ededee;background:repeating-linear-gradient(135deg,#f7f7f7 0 1.45px,#dddee0 1.45px 2.9px);"></div>
<div class="r" style="left:306.9px;top:284.8px;width:147.0px;height:1.0px;background:#c6c8ca;"></div>
<span class="t" style="left:316.1px;top:266.3px;font-size:12px;color:#4a4a4a;font-weight:400;transform:scaleX(0.8735)">Surf:F6(EXTRUDE_1)</span>
<svg class="r" style="left:435.6px;top:267.6px;" width="14" height="12" viewBox="0 0 14 12"><rect x="0.2" y="0.2" width="12.8" height="10.8" rx="2.8" fill="#77767b"/><rect x="3.2" y="4.7" width="6.8" height="1.7" fill="#fff"/></svg>
<div class="r" style="left:306.9px;top:285.8px;width:56.0px;height:19.6px;background:#fdfdfd;"></div>
<div class="r" style="left:362.6px;top:285.8px;width:1.0px;height:20.0px;background:#dde5ea;"></div>
<div class="r" style="left:420.4px;top:285.8px;width:1.0px;height:20.0px;background:#dde5ea;"></div>
<span class="t" style="left:309.1px;top:287.5px;font-size:12px;color:#4a4a4a;font-weight:400;transform:scaleX(0.9543)">Area</span>
<span class="t" style="left:366.2px;top:287.5px;font-size:12px;color:#555;font-weight:700;transform:scaleX(1.0467)">43064.17</span>
<span class="t" style="left:424.0px;top:287.5px;font-size:12px;color:#5a5a5a;font-weight:400;transform:scaleX(1.1300)">mm</span>
<span class="t" style="left:446.2px;top:284.3px;font-size:7px;color:#5a5a5a;font-weight:400;transform:scaleX(1.1008)">2</span>
<div class="r" style="left:306.9px;top:305.8px;width:56.0px;height:19.6px;background:#fdfdfd;"></div>
<div class="r" style="left:362.6px;top:305.8px;width:1.0px;height:20.0px;background:#dde5ea;"></div>
<div class="r" style="left:420.4px;top:305.8px;width:1.0px;height:20.0px;background:#dde5ea;"></div>
<div class="r" style="left:306.9px;top:304.7px;width:147.0px;height:1.0px;background:#dde5ea;"></div>
<span class="t" style="left:309.1px;top:307.4px;font-size:12px;color:#4a4a4a;font-weight:400;transform:scaleX(0.9939)">Perimeter</span>
<span class="t" style="left:380.3px;top:307.4px;font-size:12px;color:#555;font-weight:700;transform:scaleX(1.0435)">735.64</span>
<span class="t" style="left:424.0px;top:307.4px;font-size:12px;color:#5a5a5a;font-weight:400;transform:scaleX(1.1300)">mm</span>
<div class="r" style="left:306.9px;top:325.8px;width:56.0px;height:19.6px;background:#fdfdfd;"></div>
<div class="r" style="left:362.6px;top:325.8px;width:1.0px;height:20.0px;background:#dde5ea;"></div>
<div class="r" style="left:420.4px;top:325.8px;width:1.0px;height:20.0px;background:#dde5ea;"></div>
<div class="r" style="left:306.9px;top:324.7px;width:147.0px;height:1.0px;background:#dde5ea;"></div>
<span class="t" style="left:309.1px;top:327.3px;font-size:12px;color:#4a4a4a;font-weight:400;transform:scaleX(1.0044)">Diameter</span>
<span class="t" style="left:380.9px;top:327.3px;font-size:12px;color:#555;font-weight:700;transform:scaleX(1.0459)">117.08</span>
<span class="t" style="left:424.0px;top:327.3px;font-size:12px;color:#5a5a5a;font-weight:400;transform:scaleX(1.1300)">mm</span>
<div class="r" style="left:334.3px;top:295.0px;width:151.0px;height:85.8px;background:#fbfbfb;"></div>
<div class="r" style="left:335.4px;top:296.2px;width:148.9px;height:83.4px;background:#ffffff;border:1px solid #a3a5a7;box-sizing:border-box;"></div>
<div class="r" style="left:336.3px;top:297.1px;width:147.0px;height:21.0px;background:#ededee;background:linear-gradient(#fcfcfc,#e3e4e6);"></div>
<div class="r" style="left:336.3px;top:318.1px;width:147.0px;height:1.0px;background:#c6c8ca;"></div>
<span class="t" style="left:345.5px;top:299.6px;font-size:12px;color:#4a4a4a;font-weight:400;transform:scaleX(0.8735)">Surf:F6(EXTRUDE_1)</span>
<svg class="r" style="left:465.0px;top:300.9px;" width="14" height="12" viewBox="0 0 14 12"><rect x="0.2" y="0.2" width="12.8" height="10.8" rx="2.8" fill="#77767b"/><rect x="3.2" y="4.7" width="6.8" height="1.7" fill="#fff"/></svg>
<div class="r" style="left:336.3px;top:319.1px;width:56.0px;height:19.6px;background:#f6f6f6;"></div>
<div class="r" style="left:392.0px;top:319.1px;width:1.0px;height:20.0px;background:#dde5ea;"></div>
<div class="r" style="left:449.8px;top:319.1px;width:1.0px;height:20.0px;background:#dde5ea;"></div>
<span class="t" style="left:338.5px;top:320.8px;font-size:12px;color:#4a4a4a;font-weight:400;transform:scaleX(0.9543)">Area</span>
<span class="t" style="left:395.6px;top:320.8px;font-size:12px;color:#555;font-weight:700;transform:scaleX(1.0467)">43064.17</span>
<span class="t" style="left:453.4px;top:320.8px;font-size:12px;color:#5a5a5a;font-weight:400;transform:scaleX(1.1300)">mm</span>
<span class="t" style="left:475.6px;top:317.6px;font-size:7px;color:#5a5a5a;font-weight:400;transform:scaleX(1.1008)">2</span>
<div class="r" style="left:336.3px;top:339.1px;width:56.0px;height:19.6px;background:#f6f6f6;"></div>
<div class="r" style="left:392.0px;top:339.1px;width:1.0px;height:20.0px;background:#dde5ea;"></div>
<div class="r" style="left:449.8px;top:339.1px;width:1.0px;height:20.0px;background:#dde5ea;"></div>
<div class="r" style="left:336.3px;top:338.0px;width:147.0px;height:1.0px;background:#dde5ea;"></div>
<span class="t" style="left:338.5px;top:340.7px;font-size:12px;color:#4a4a4a;font-weight:400;transform:scaleX(0.9939)">Perimeter</span>
<span class="t" style="left:409.7px;top:340.7px;font-size:12px;color:#555;font-weight:700;transform:scaleX(1.0435)">735.64</span>
<span class="t" style="left:453.4px;top:340.7px;font-size:12px;color:#5a5a5a;font-weight:400;transform:scaleX(1.1300)">mm</span>
<div class="r" style="left:336.3px;top:359.1px;width:56.0px;height:19.6px;background:#f6f6f6;"></div>
<div class="r" style="left:392.0px;top:359.1px;width:1.0px;height:20.0px;background:#dde5ea;"></div>
<div class="r" style="left:449.8px;top:359.1px;width:1.0px;height:20.0px;background:#dde5ea;"></div>
<div class="r" style="left:336.3px;top:358.0px;width:147.0px;height:1.0px;background:#dde5ea;"></div>
<span class="t" style="left:338.5px;top:360.6px;font-size:12px;color:#4a4a4a;font-weight:400;transform:scaleX(1.0044)">Diameter</span>
<span class="t" style="left:410.3px;top:360.6px;font-size:12px;color:#555;font-weight:700;transform:scaleX(1.0459)">117.08</span>
<span class="t" style="left:453.4px;top:360.6px;font-size:12px;color:#5a5a5a;font-weight:400;transform:scaleX(1.1300)">mm</span>
<div class="r" style="left:676.0px;top:154.8px;width:350.2px;height:497.0px;background:#e8e9eb;box-shadow:0 0 3px 1px rgba(0,0,0,.45);border-left:2px solid #fbfbfb;border-top:1.3px solid #fbfbfb;border-right:1.6px solid #f7f7f7;border-bottom:1.5px solid #f7f7f7;box-sizing:border-box;"></div>
<span class="t" style="left:799.7px;top:163.9px;font-size:12px;color:#9b9b9b;font-weight:400;transform:scaleX(0.9790)">Measure: Summary</span>
<svg class="r" style="left:1004.5px;top:166.0px;" width="11" height="11" viewBox="0 0 11 11"><path d="M1.6,1.6L8.6,8.6M8.6,1.6L1.6,8.6" stroke="#8c8c8c" stroke-width="2.1"/></svg>
<div class="r" style="left:678.0px;top:185.1px;width:346.5px;height:1.0px;background:#bdbebf;"></div>
<div class="r" style="left:678.0px;top:186.1px;width:346.5px;height:29.0px;background:#efeff0;"></div>
<div class="r" style="left:680.2px;top:186.3px;width:27.8px;height:27.6px;background:#e0e1e3;border:1px solid #aeafb1;box-sizing:border-box;"></div>
<div class="r" style="left:904.0px;top:187.0px;width:1.0px;height:27.0px;background:#d2d3d5;"></div>
<svg class="r" style="left:682.8px;top:189.0px;" width="22" height="22" viewBox="0 0 22 22"><path d="M1.5,14.9L15.6,1.5L21.4,7.3L7.8,20.9Z" fill="#ededed" stroke="#c3c3c3" stroke-width="0.8" stroke-linejoin="round"/><path d="M9.31,19.39l-1.70,-1.70M10.82,17.88l-2.55,-2.55M12.33,16.37l-1.70,-1.70M13.84,14.86l-2.55,-2.55M15.36,13.34l-1.70,-1.70M16.87,11.83l-2.55,-2.55M18.38,10.32l-1.70,-1.70M19.89,8.81l-2.55,-2.55" stroke="#b3b3b3" stroke-width="0.8" fill="none"/></svg>
<svg class="r" style="left:710.8px;top:189.0px;" width="22" height="22" viewBox="0 0 22 22"><path d="M1.7,2.1V13.6M20.8,2.1V13.6" stroke="#b9b9b9" stroke-width="1.1"/><path d="M3.2,5Q7.5,3.6 11,7.6T19.2,10" fill="none" stroke="#adadad" stroke-width="1.1"/><path d="M2.4,7.4L2.8,3.9L6,5.6ZM20.2,12L19.8,8.4L16.8,10.4Z" fill="#a6a6a6"/><path d="M1.7,16.9Q7,12.6 11.5,16.6T20.8,16" fill="none" stroke="#c2c2c2" stroke-width="1.8"/></svg>
<svg class="r" style="left:738.8px;top:189.0px;" width="22" height="22" viewBox="0 0 22 22"><path d="M1.7,1.3V13.6M12.8,1.3V10.7" stroke="#b9b9b9" stroke-width="1.1"/><path d="M3.5,4.6H11" stroke="#a6a6a6" stroke-width="1"/><path d="M5.6,2.6L2.4,4.6L5.6,6.6ZM8.9,2.6L12.1,4.6L8.9,6.6Z" fill="#a6a6a6"/><circle cx="3.2" cy="17.2" r="1.9" fill="#bcbcbc"/><circle cx="14.2" cy="14" r="1.9" fill="#bcbcbc"/><circle cx="19.2" cy="19.1" r="1.9" fill="#bcbcbc"/></svg>
<svg class="r" style="left:767.2px;top:189.0px;" width="22" height="22" viewBox="0 0 22 22"><path d="M20.7,20.1H1.4L15.4,5.3" fill="none" stroke="#c0c0c0" stroke-width="1.5" stroke-linejoin="round"/><path d="M15.4,9.2Q19,13 18.6,17.6" fill="none" stroke="#9d9d9d" stroke-width="1"/><path d="M13.6,10.6L14.2,6.8L17.8,8.6ZM16.4,15.8L18.6,19.4L20.6,15.6Z" fill="#9d9d9d"/></svg>
<svg class="r" style="left:795.2px;top:189.0px;" width="22" height="22" viewBox="0 0 22 22"><circle cx="11" cy="11" r="8.7" fill="#f3f3f3" stroke="#c4c4c4" stroke-width="1"/><path d="M7,15L15,7" stroke="#a3a3a3" stroke-width="1.1"/><path d="M5,17L5.8,12.8L9.2,16.2ZM17,5L12.8,5.8L16.2,9.2Z" fill="#a3a3a3"/></svg>
<svg class="r" style="left:822.8px;top:189.0px;" width="22" height="22" viewBox="0 0 22 22"><rect x="2.5" y="2.5" width="17" height="17" fill="#f3f3f3" stroke="#bdbdbd" stroke-width="1.1"/><path d="M5.5,5.5L16.5,16.5M16.500,5.5L5.5,16.5" stroke="#a6a6a6" stroke-width="1"/><path d="M4,4H7.8L4,7.8ZM18,4V7.8L14.200,4ZM4,18V14.2L7.800,18ZM18,18H14.2L18,14.2Z" fill="#a6a6a6"/></svg>
<svg class="r" style="left:850.8px;top:189.0px;" width="22" height="22" viewBox="0 0 22 22"><path d="M2.5,6.5L5.500,2.5H19.5V15.5L16.5,19.5H2.5Z" fill="#f0f0f0" stroke="#c6c6c6" stroke-width="0.9"/><path d="M2.5,6.5H16.5V19.5M16.5,6.5L19.5,2.5M5.5,2.5V10.5H19.500M5.5,10.5L2.5,13" fill="none" stroke="#c4c4c4" stroke-width="0.8"/><path d="M2.5,12.5H16.5L19.5,9.500V15.5L16.5,19.5H2.5Z" fill="#dadada" opacity=".85"/></svg>
<svg class="r" style="left:878.0px;top:187.0px;" width="24" height="24" viewBox="0 0 24 24"><g font-family="Liberation Sans" font-weight="700" font-size="8.2" fill="#a9a9a9"><text x="4.2" y="7.6">y</text><text x="8.8" y="10.8" fill="#c6c6c6" font-weight="400">x</text><text x="1.8" y="13.6" fill="#bcbcbc">z</text><text x="16" y="16.6">x</text><text x="10.8" y="21.4" fill="#b0b0b0">y</text><text x="17.4" y="22.8">z</text></g><path d="M3.2,15.8V19H8.2" fill="none" stroke="#9f9f9f" stroke-width="1.3"/><path d="M6.4,16.6L9,19L6.400,21.4Z" fill="#9f9f9f"/></svg>
<svg class="r" style="left:935.0px;top:190.0px;" width="22" height="20" viewBox="0 0 22 20"><defs><linearGradient id="er" x1="0" y1="0" x2="0" y2="1"><stop offset="0" stop-color="#f1f1f1"/><stop offset="0.7" stop-color="#e6e6e6"/><stop offset="1" stop-color="#cfcfcf"/></linearGradient></defs><path d="M9.5,16.4H18.5" stroke="#d6d6d6" stroke-width="0.9"/><g transform="rotate(-35 9.7 10.9)"><rect x="2.8" y="7.4" width="13.8" height="7" rx="2.2" fill="url(#er)" stroke="#d4d4d4" stroke-width="0.5"/></g></svg>
<svg class="r" style="left:963.0px;top:190.0px;" width="19" height="20" viewBox="0 0 19 20"><defs><linearGradient id="sv" x1="0" y1="0" x2="1" y2="0"><stop offset="0" stop-color="#9c9c9c"/><stop offset="0.12" stop-color="#6f6f6f"/><stop offset="1" stop-color="#6a6a6a"/></linearGradient><linearGradient id="sv2" x1="0" y1="0" x2="0" y2="1"><stop offset="0" stop-color="#ffffff"/><stop offset="1" stop-color="#e4e4e4"/></linearGradient><linearGradient id="sv3" x1="0" y1="0" x2="1" y2="1"><stop offset="0" stop-color="#e4f3fb"/><stop offset="1" stop-color="#8ecbea"/></linearGradient></defs><path d="M0.200,0.300H18V18.800H1.600L0.200,17.600Z" fill="url(#sv)"/><rect x="2.200" y="0.500" width="13.4" height="9.200" fill="url(#sv2)"/><rect x="3.800" y="12" width="11" height="6.800" fill="#8d8d8d"/><rect x="7.600" y="12.400" width="5.400" height="6" fill="url(#sv3)"/><rect x="5.200" y="13.200" width="1.800" height="5.200" fill="#6a6a6a"/></svg>
<svg class="r" style="left:982.2px;top:197.6px;" width="8" height="5" viewBox="0 0 8 5"><path d="M0,0H6.800L3.400,3.900Z" fill="#555"/></svg>
<svg class="r" style="left:1004.0px;top:193.6px;" width="13.5" height="11.5" viewBox="0 0 13.5 11.5"><rect x="0" y="0" width="13" height="11" rx="2.800" fill="#afafaf"/><rect x="3" y="4.800" width="7" height="1.500" fill="#fff"/></svg>
<div class="r" style="left:678.0px;top:214.2px;width:346.5px;height:1.0px;background:#c6c8ca;"></div>
<div class="r" style="left:678.4px;top:216.4px;width:345.8px;height:402.6px;background:#fbfbfb;border:1px solid #cfd0d2;box-sizing:border-box;"></div>
<div class="r" style="left:806.6px;top:216.4px;width:217.6px;height:23.4px;background:#eeeeef;border:1px solid #c6c7c9;box-sizing:border-box;"></div>
<div class="r" style="left:679.4px;top:216.4px;width:127.2px;height:1.0px;background:#c6c7c9;"></div>
<span class="t" style="left:741.4px;top:220.6px;font-size:12px;color:#b1b1b1;font-weight:400;transform:scaleX(0.9712)">Analysis</span>
<span class="t" style="left:825.5px;top:220.8px;font-size:12px;color:#c2c2c2;font-weight:400;transform:scaleX(1.0518)">Feature</span>
<svg class="r" style="left:683.4px;top:246.0px;" width="13" height="11" viewBox="0 0 13 11"><rect x="0" y="0" width="12.6" height="10.6" rx="2.4" fill="#adadad"/><rect x="3" y="4.4" width="6.6" height="1.8" fill="#fff"/></svg>
<span class="t" style="left:703.3px;top:244.0px;font-size:12px;color:#a4a4a4;font-weight:700;transform:scaleX(1.0137)">Setup</span>
<div class="r" style="left:740.6px;top:250.0px;width:110.0px;height:1.0px;background:#d6d7d9;"></div>
<div class="r" style="left:683.0px;top:264.0px;width:336.2px;height:100.6px;background:#ffffff;border:1px solid #cfd0d2;box-sizing:border-box;box-shadow:inset 0 0 0 1px #f2f2f2;"></div>
<span class="t" style="left:689.9px;top:269.6px;font-size:12px;color:#a6a6a6;font-weight:400;transform:scaleX(0.9499)">Reference</span>
<div class="r" style="left:685.4px;top:286.2px;width:332.0px;height:1.0px;background:#cfd0d2;"></div>
<div class="r" style="left:685.0px;top:287.2px;width:332.0px;height:18.4px;background:#ebfbe2;"></div>
<span class="t" style="left:698.3px;top:288.6px;font-size:12px;color:#ababab;font-weight:400;transform:scaleX(0.8777)">Surf:F6(EXTRUDE_1)</span>
<span class="t" style="left:685.4px;top:372.6px;font-size:12px;color:#a6a6a6;font-weight:400;transform:scaleX(1.0176)">Projection:</span>
<div class="r" style="left:747.4px;top:368.4px;width:158.2px;height:25.2px;background:#f8f5fe;border:1px solid #c9cacc;box-sizing:border-box;"></div>
<span class="t" style="left:764.8px;top:372.6px;font-size:12px;color:#a9a9a9;font-weight:400;transform:scaleX(1.0020)">Click here to add item</span>
<div class="r" style="left:908.0px;top:367.4px;width:27.8px;height:27.2px;background:#e8e9eb;border:1px solid #d3d4d6;box-sizing:border-box;"></div>
<svg class="r" style="left:914.0px;top:373.5px;" width="16" height="14" viewBox="0 0 16 14"><rect x="0.3" y="0.3" width="15.4" height="10.8" rx="1" fill="#c3c3c3" stroke="#b3b3b3" stroke-width="0.6"/><rect x="2.6" y="2.600" width="10.800" height="6.200" fill="#ececec"/><path d="M6,11.100H10V12.200H12V13.400H4V12.200H6Z" fill="#b3b3b3"/></svg>
<div class="r" style="left:938.4px;top:369.3px;width:80.6px;height:22.4px;background:#f7f7f7;border:1px solid #cdced0;box-sizing:border-box;"></div>
<div class="r" style="left:1002.9px;top:369.3px;width:1.0px;height:22.4px;background:#cdced0;"></div>
<span class="t" style="left:945.8px;top:372.6px;font-size:12px;color:#a6a6a6;font-weight:400;transform:scaleX(0.9521)">Cartesian</span>
<svg class="r" style="left:1007.0px;top:378.6px;" width="8" height="5" viewBox="0 0 8 5"><path d="M0,0H6.8L3.4,4Z" fill="#8f8f8f"/></svg>
<svg class="r" style="left:683.4px;top:410.8px;" width="13" height="11" viewBox="0 0 13 11"><rect x="0" y="0" width="12.6" height="10.6" rx="2.4" fill="#adadad"/><rect x="3" y="4.4" width="6.6" height="1.8" fill="#fff"/></svg>
<span class="t" style="left:703.8px;top:408.8px;font-size:12px;color:#a4a4a4;font-weight:700;transform:scaleX(0.9271)">Results</span>
<div class="r" style="left:747.4px;top:415.6px;width:207.0px;height:1.0px;background:#d6d7d9;"></div>
<div class="r" style="left:957.0px;top:415.9px;width:13.0px;height:1.0px;background:#c2c2c2;"></div>
<svg class="r" style="left:976.5px;top:407.0px;" width="14" height="20" viewBox="0 0 14 20"><rect x="0.300" y="0" width="12.800" height="19.500" rx="2.600" fill="#9c9c9c"/><rect x="5" y="3" width="3.100" height="3.100" fill="#fff"/><path d="M3.800,8.200H8.200V14.800H9.600V16.800H3.800V14.800H5.100V10.200H3.800Z" fill="#fff"/></svg>
<svg class="r" style="left:1003.5px;top:409.0px;" width="14" height="17" viewBox="0 0 14 17"><path d="M0.500,0.500H8.800L12.800,4.500V15.800H0.500Z" fill="#ececec" stroke="#cbcbcb" stroke-width="0.900"/><path d="M8.800,0.500V4.500H12.800Z" fill="#dcdcdc" stroke="#cbcbcb" stroke-width="0.600"/><path d="M5.800,7.800H11M5.800,11.800H11" stroke="#b5b5b5" stroke-width="1"/><circle cx="3.400" cy="7.800" r="1.100" fill="#f6f6f6" stroke="#b5b5b5" stroke-width="0.700"/><circle cx="3.400" cy="11.800" r="1.100" fill="#f6f6f6" stroke="#b5b5b5" stroke-width="0.700"/></svg>
<div class="r" style="left:683.0px;top:431.0px;width:336.2px;height:184.6px;background:#ffffff;border:1px solid #cfd0d2;box-sizing:border-box;box-shadow:inset 0 0 0 1px #f2f2f2;"></div>
<div class="r" style="left:685.0px;top:433.0px;width:332.0px;height:20.0px;background:#f8f8f8;"></div>
<div class="r" style="left:685.2px;top:453.0px;width:331.6px;height:1.0px;background:#cfd0d2;"></div>
<div class="r" style="left:685.0px;top:473.0px;width:332.0px;height:1.0px;background:#e3e7ea;"></div>
<div class="r" style="left:685.0px;top:493.0px;width:332.0px;height:1.0px;background:#e3e7ea;"></div>
<div class="r" style="left:685.0px;top:513.0px;width:332.0px;height:1.0px;background:#e3e7ea;"></div>
<div class="r" style="left:798.4px;top:434.0px;width:1.0px;height:80.0px;background:#dfe3e6;"></div>
<div class="r" style="left:876.5px;top:434.0px;width:1.0px;height:80.0px;background:#dfe3e6;"></div>
<div class="r" style="left:930.3px;top:434.0px;width:1.0px;height:80.0px;background:#dfe3e6;"></div>
<div class="r" style="left:1016.3px;top:434.0px;width:1.0px;height:80.0px;background:#e6e8ea;"></div>
<span class="t" style="left:689.3px;top:436.5px;font-size:12px;color:#a6a6a6;font-weight:400;transform:scaleX(0.9535)">Reference</span>
<span class="t" style="left:803.5px;top:436.5px;font-size:12px;color:#a6a6a6;font-weight:400;transform:scaleX(0.9724)">Measure</span>
<span class="t" style="left:881.2px;top:436.5px;font-size:12px;color:#a6a6a6;font-weight:400;transform:scaleX(0.9727)">Value</span>
<span class="t" style="left:935.4px;top:436.5px;font-size:12px;color:#a6a6a6;font-weight:400;transform:scaleX(1.0130)">Units</span>
<span class="t" style="left:687.0px;top:455.5px;font-size:12px;color:#ababab;font-weight:400;transform:scaleX(0.8794)">Surf:F6(EXTRUDE_1)</span>
<span class="t" style="left:801.6px;top:455.5px;font-size:12px;color:#ababab;font-weight:400;transform:scaleX(0.9622)">Area</span>
<span class="t" style="left:879.3px;top:455.5px;font-size:12px;color:#ababab;font-weight:400;transform:scaleX(0.9189)">43064.17</span>
<span class="t" style="left:933.8px;top:455.5px;font-size:12px;color:#ababab;font-weight:400;transform:scaleX(1.1100)">mm</span>
<span class="t" style="left:955.6px;top:452.3px;font-size:7.5px;color:#ababab;font-weight:400;transform:scaleX(1.0427)">2</span>
<span class="t" style="left:801.6px;top:475.9px;font-size:12px;color:#ababab;font-weight:400;transform:scaleX(0.9901)">Perimeter</span>
<span class="t" style="left:879.6px;top:475.9px;font-size:12px;color:#ababab;font-weight:400;transform:scaleX(0.9127)">735.64</span>
<span class="t" style="left:933.8px;top:475.9px;font-size:12px;color:#ababab;font-weight:400;transform:scaleX(1.1100)">mm</span>
<span class="t" style="left:801.6px;top:495.9px;font-size:12px;color:#ababab;font-weight:400;transform:scaleX(0.9982)">Diameter</span>
<span class="t" style="left:879.9px;top:495.9px;font-size:12px;color:#ababab;font-weight:400;transform:scaleX(0.9354)">117.08</span>
<span class="t" style="left:933.8px;top:495.9px;font-size:12px;color:#ababab;font-weight:400;transform:scaleX(1.1100)">mm</span>
<div class="r" style="left:678.0px;top:619.0px;width:346.5px;height:31.3px;background:#eeeff0;"></div>
<div class="r" style="left:678.0px;top:621.6px;width:346.5px;height:1.0px;background:#c9cacc;"></div>
<div class="r" style="left:962.3px;top:626.5px;width:59.3px;height:22.0px;background:#e2e3e5;border:1px solid #c3c4c6;box-sizing:border-box;"></div>
<span class="t" style="left:976.4px;top:629.7px;font-size:12px;color:#b2b2b2;font-weight:400;transform:scaleX(0.9841)">Close</span>
<div class="r" style="left:847.4px;top:214.4px;width:255.7px;height:105.7px;background:#ffffff;border:1px solid #c9cbcd;box-sizing:border-box;box-shadow:0 1px 3px rgba(0,0,0,.22);"></div>
<svg class="r" style="left:856.0px;top:222.2px;" width="14" height="14" viewBox="0 0 14 14"><circle cx="6.8" cy="6.8" r="5.4" fill="#fff" stroke="#3a3a3a" stroke-width="1.15"/><circle cx="6.8" cy="6.8" r="2.8" fill="#2a2a2a"/></svg>
<svg class="r" style="left:856.0px;top:241.2px;" width="14" height="14" viewBox="0 0 14 14"><circle cx="6.8" cy="6.8" r="5.4" fill="#fff" stroke="#3a3a3a" stroke-width="1.15"/></svg>
<span class="t" style="left:875.9px;top:221.8px;font-size:12px;color:#333;font-weight:400;transform:scaleX(0.9629)">Make Feature</span>
<span class="t" style="left:875.9px;top:240.7px;font-size:12px;color:#333;font-weight:400;transform:scaleX(0.9409)">Save Analysis</span>
<span class="t" style="left:858.5px;top:265.5px;font-size:12px;color:#333;font-weight:400;transform:scaleX(1.0214)">Name</span>
<div class="r" style="left:895.2px;top:262.6px;width:199.6px;height:22.0px;background:#ffffff;border:1px solid #b3b5b7;box-sizing:border-box;"></div>
<span class="t" style="left:898.5px;top:265.5px;font-size:12px;color:#333;font-weight:400;transform:scaleX(0.9010)">ANALYSIS1</span>
<div class="r" style="left:957.4px;top:266.5px;width:1.0px;height:14.0px;background:#1b66c9;"></div>
<div class="r" style="left:973.1px;top:289.3px;width:59.5px;height:22.4px;background:#a6e0fc;border:1px solid #6cbfe8;box-sizing:border-box;"></div>
<span class="t" style="left:994.8px;top:292.7px;font-size:12px;color:#333;font-weight:400;transform:scaleX(0.9514)">OK</span>
<div class="r" style="left:1035.3px;top:289.3px;width:59.5px;height:22.4px;background:#f6f6f6;border:1px solid #acaeb0;box-sizing:border-box;"></div>
<span class="t" style="left:1046.9px;top:292.7px;font-size:12px;color:#333;font-weight:400;transform:scaleX(0.9609)">Cancel</span>
<svg class="r" style="left:815.0px;top:212.0px;" width="60" height="36" viewBox="0 0 60 36"><g transform="translate(-815,-212)" fill="none" stroke="#fda503" stroke-width="4.2" stroke-linecap="round" stroke-linejoin="round"><path d="M827,227.7L853.5,227.2"/><path d="M847,220.8C850,222 853,223.8 855.3,226.2C852.5,228.5 851,231 850.3,233C849.3,235.5 847.8,237.2 846,238.5"/><path d="M849.5,223.8L853.5,226.3" stroke-width="4.6"/></g></svg>
</div>
</body></html>
